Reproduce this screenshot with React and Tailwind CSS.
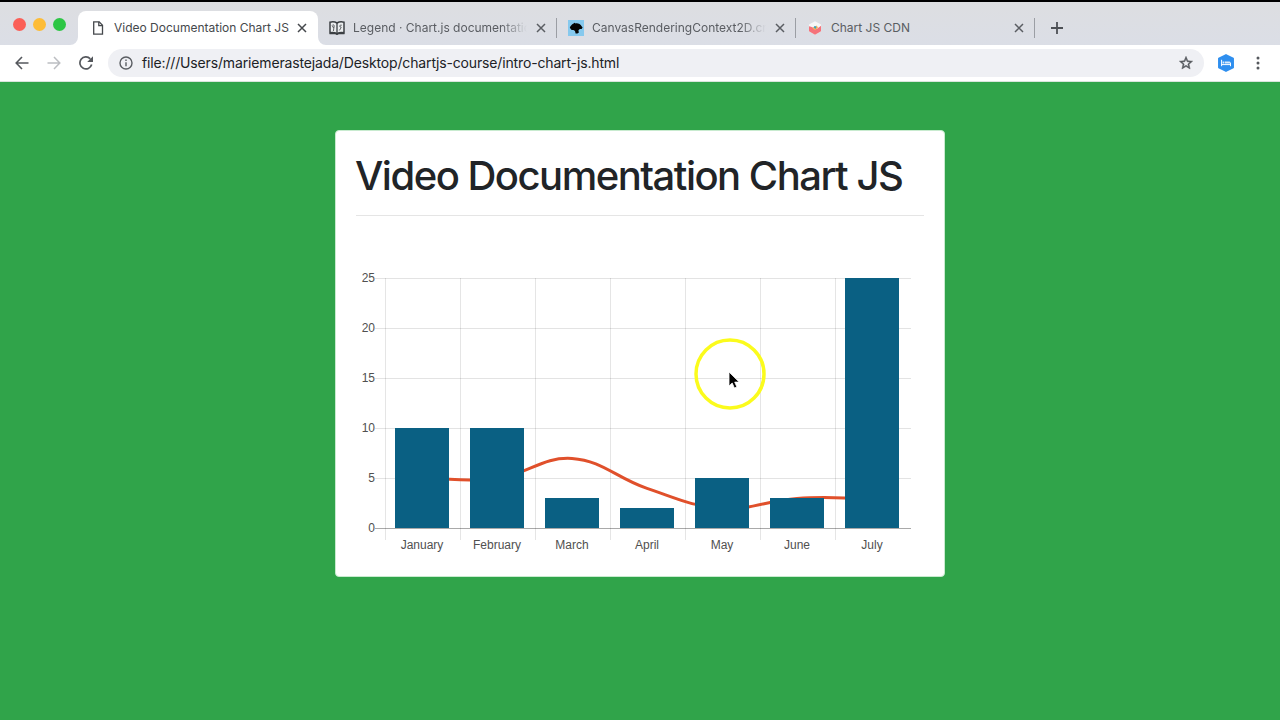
import React from "react";

const UI = "font-['Inter','Liberation_Sans',sans-serif]";

function CloseIcon({ className }) {
  return (
    <svg className={className} width="10" height="10" viewBox="0 0 10 10" fill="none" stroke="currentColor" strokeWidth="1.5">
      <path d="M1 1l8 8M9 1l-8 8" />
    </svg>
  );
}

function FileIcon() {
  return (
    <svg width="12" height="14" viewBox="0 0 12 14" fill="none" stroke="#45484c" strokeWidth="1.3">
      <path d="M1.7 0.8h5.500l3.300 3.400v9H1.700z" />
      <path d="M6.8 0.8v3.8h3.7" />
    </svg>
  );
}

function BookIcon() {
  return (
    <svg width="16" height="14" viewBox="0 0 16 14" fill="none" stroke="#3c4044">
      <path d="M1 1.2C3.500.6 6 .8 8 2c2-1.200 4.500-1.400 7-.8v10.500c-2.500-.5-5-.3-7 1-2-1.300-4.500-1.500-7-1z" fill="#eceef0" strokeWidth="1.500" />
      <path d="M.5 12.700h6l1.500.7 1.500-.7h6" strokeWidth="1.300" />
      <path d="M8 2v11" strokeWidth="1.300" />
      <path d="M3 4.600c.6-1.200 2.200-1 2.200.2L4.400 10M3.400 5l1.200 2M12.800 4.200c-1.400-.4-2.400.2-2 1.400l1.400.6c-.2 1.400-1.400 2-1.800 3.200" strokeWidth=".8" />
    </svg>
  );
}

function RaccoonIcon() {
  return (
    <svg width="16" height="16" viewBox="0 0 16 16">
      <rect width="16" height="16" fill="#86c9ee" />
      <path d="M1.800 7.600C2.600 5.400 4 4.600 5.200 3.800L6.600 2.800l1 .6c2.400-.4 5 .8 6 2.800l1 1.400-1 1.500-1.700-.1c-.8.5-1.300.9-1.500 1.600l.5 2-1.500.9H7.600l-.6-2.600-1.500-1-1.800.1-1-.9z" fill="#050505" />
    </svg>
  );
}

function ChartJsIcon() {
  return (
    <svg width="14" height="14" viewBox="0 0 14 14">
      <path d="M7 .3l6 3.300v6.700L7 13.700 1 10.300V3.600z" fill="#f7f7f8" />
      <path d="M1 5.200l2 .5 2.300 1.100L9 7.800l4-3v5.500L7 13.700 1 10.300z" fill="#f5737b" />
      <path d="M4.300 6.800L6.500 6l2.300-1.500L10 6.800 7.600 8.700 6 8.400z" fill="#f3b75c" />
      <path d="M5.600 6.300l1-1.300 1.200.2.700 1-1.100 1.700z" fill="#3d9fc4" />
    </svg>
  );
}

function Chart() {
  const months = ["January", "February", "March", "April", "May", "June", "July"];
  const bars = [10, 10, 3, 2, 5, 3, 25];
  const line = [5, 5, 7, 4, 2, 3, 3];
  const cx = (i) => 66 + 75 * i;
  const cy = (v) => 268 - 10 * v;

  const controls = line.map((v, i) => {
    const p = [cx(i), cy(v)];
    const a = i > 0 ? [cx(i - 1), cy(line[i - 1])] : p;
    const b = i < line.length - 1 ? [cx(i + 1), cy(line[i + 1])] : p;
    const d1 = Math.hypot(p[0] - a[0], p[1] - a[1]);
    const d2 = Math.hypot(b[0] - p[0], b[1] - p[1]);
    const f1 = (0.4 * d1) / (d1 + d2);
    const f2 = (0.4 * d2) / (d1 + d2);
    return {
      before: [p[0] - f1 * (b[0] - a[0]), p[1] - f1 * (b[1] - a[1])],
      after: [p[0] + f2 * (b[0] - a[0]), p[1] + f2 * (b[1] - a[1])],
      p,
    };
  });
  const path = controls
    .map((c, i) => (i === 0 ? `M${c.p}` : `C${controls[i - 1].after} ${c.before} ${c.p}`))
    .join(" ");

  return (
    <svg width="568" height="300" viewBox="0 0 568 300" className="block font-['Liberation_Sans',sans-serif] text-[12px]">
      {[0, 5, 10, 15, 20, 25].map((v) => (
        <g key={v}>
          <rect x="19" y={cy(v)} width="536" height="1" fill={v === 0 ? "#a9a9a9" : "#e3e3e3"} />
          <text x="19" y={cy(v) + 4.4} textAnchor="end" fill="#505050">{v}</text>
        </g>
      ))}
      {[0, 1, 2, 3, 4, 5, 6].map((i) => (
        <rect key={i} x={29 + 75 * i} y="18" width="1" height="262" fill="#000" fillOpacity="0.1" />
      ))}
      <path d={path} fill="none" stroke="#e0502b" strokeWidth="3" transform="translate(0 .4)" />
      {bars.map((v, i) => (
        <g key={i}>
          <rect x={39 + 75 * i} y={cy(v)} width="54" height={10 * v} fill="#0a6083" />
          <text x={cx(i)} y="289" textAnchor="middle" fill="#505050">{months[i]}</text>
        </g>
      ))}
    </svg>
  );
}

function Tabs() {
  const title = "shrink-0 overflow-hidden whitespace-nowrap text-[12px] leading-5";
  const fade = "[mask-image:linear-gradient(to_right,#000_85%,transparent)]";
  return (
    <div className="flex h-[43px] items-start bg-gradient-to-b from-[#dddee1] to-[#dbdee6] text-[#5a5d62]">
      <div className="flex w-[78px] gap-[7px] pl-[12.5px] pt-[16px]">
        <span className="size-[13px] rounded-full bg-[#fb5f57]" />
        <span className="size-[13px] rounded-full bg-[#fdbc37]" />
        <span className="size-[13px] rounded-full bg-[#2dc645]" />
      </div>
      <div className="relative mt-[9px] flex h-[34px] w-[240px] items-center rounded-t-lg bg-white pl-[14px] text-[#45484c]">
        <svg className="absolute -left-2 bottom-0" width="8" height="8"><path d="M8 0v8H0a8 8 0 0 0 8-8z" fill="#fff" /></svg>
        <svg className="absolute -right-2 bottom-0" width="8" height="8"><path d="M0 0v8h8a8 8 0 0 1-8-8z" fill="#fff" /></svg>
        <FileIcon />
        <span className={`${title} ml-[10px] w-[178px]`}>Video Documentation Chart JS</span>
        <CloseIcon className="ml-[5px]" />
      </div>
      <div className="mt-[9px] flex h-[34px] w-[239px] items-center pl-[11px]">
        <BookIcon />
        <span className={`${title} ${fade} ml-2 w-[174px]`}>Legend · Chart.js documentation</span>
        <CloseIcon className="ml-[9px]" />
        <span className="ml-[10px] h-5 w-px bg-[#9b9ea4]" />
      </div>
      <div className="mt-[9px] flex h-[34px] w-[239px] items-center pl-[11px]">
        <RaccoonIcon />
        <span className={`${title} ${fade} ml-2 w-[174px]`}>CanvasRenderingContext2D.cr</span>
        <CloseIcon className="ml-[9px]" />
        <span className="ml-[10px] h-5 w-px bg-[#9b9ea4]" />
      </div>
      <div className="mt-[9px] flex h-[34px] w-[239px] items-center pl-[12px]">
        <ChartJsIcon />
        <span className={`${title} ml-[9px] w-[174px]`}>Chart JS CDN</span>
        <CloseIcon className="ml-[9px]" />
        <span className="ml-[10px] h-5 w-px bg-[#9b9ea4]" />
      </div>
      <svg className="ml-4 mt-[20px]" width="12" height="12" viewBox="0 0 12 12" stroke="#4d5055" strokeWidth="1.800"><path d="M6 0v12M0 6h12" /></svg>
    </div>
  );
}

function Toolbar() {
  return (
    <div className="flex h-[37px] items-center border-b border-[#d9e5dc] bg-white pl-[15px]">
      <svg width="14" height="14" viewBox="0 0 14 14" fill="none" stroke="#55585d" strokeWidth="1.600"><path d="M13.500 7H1.500M7 1L1.200 7 7 13" /></svg>
      <svg className="ml-[18px]" width="14" height="14" viewBox="0 0 14 14" fill="none" stroke="#bcbec2" strokeWidth="1.500"><path d="M.5 7h12M7 1l5.800 6L7 13" /></svg>
      <svg className="ml-[18px]" width="14" height="14" viewBox="0 0 14 14" fill="none" stroke="#55585d" strokeWidth="1.700">
        <path d="M12.700 8.600A6 6 0 1 1 11.300 2.800" />
        <path d="M14 .2v5.800H8.200z" fill="#55585d" stroke="none" />
      </svg>
      <div className="ml-[15px] flex h-7 w-[1096px] items-center rounded-full bg-[#eff0f4] pl-[11px] pr-[10px]">
        <svg width="14" height="14" viewBox="0 0 14 14" fill="none" stroke="#5a5d62" strokeWidth="1.400">
          <circle cx="7" cy="7" r="6" />
          <path d="M7 6.200v4M7 3.500v1.500" />
        </svg>
        <span className="ml-[9px] text-[14px] leading-5 tracking-[-0.15px] whitespace-nowrap text-[#202226]">file:///Users/mariemerastejada/Desktop/chartjs-course/intro-chart-js.html</span>
        <svg className="ml-auto" width="16" height="16" viewBox="0 0 24 24" fill="#55585d" stroke="#55585d" strokeWidth=".7">
          <path d="M22 9.240l-7.190-.62L12 2 9.190 8.630 2 9.240l5.460 4.730L5.820 21 12 17.270 18.180 21l-1.630-7.030L22 9.240zM12 15.400l-3.760 2.270 1-4.280-3.320-2.880 4.380-.38L12 6.100l1.710 4.040 4.380.38-3.320 2.880 1 4.280L12 15.400z" />
        </svg>
      </div>
      <svg className="ml-[13px]" width="18" height="18" viewBox="0 0 18 18">
        <path d="M9 .8l7.200 3.700v9L9 17.200 1.800 13.500v-9z" fill="#2f8fef" stroke="#2f8fef" strokeWidth="1.500" strokeLinejoin="round" />
        <path d="M4.600 5.800v6.400M4.600 10.600h8.900M13.500 8.700v3.500" stroke="#fff" strokeWidth="1" />
        <path d="M5.600 7.600h1.800v1.800H5.600zM8 7.400h4.200q1.200 0 1.200 1.200v1H8z" fill="#d8eafc" />
      </svg>
      <svg className="ml-[21px]" width="4" height="14" viewBox="0 0 4 14" fill="#55585d"><circle cx="2" cy="2" r="1.500" /><circle cx="2" cy="7" r="1.500" /><circle cx="2" cy="12" r="1.500" /></svg>
    </div>
  );
}

export default function App() {
  return (
    <div className={`relative flex h-[720px] w-[1280px] flex-col overflow-hidden bg-[#30a44a] ${UI}`}>
      <div className="h-[2px] shrink-0 bg-black" />
      <Tabs />
      <Toolbar />
      <main className="flex flex-1 justify-center">
        <section className="mt-12 h-[447px] w-[610px] rounded-[4px] border border-[#c8ebcf] bg-white px-5 pt-5">
          <h1 className="-ml-px h-12 whitespace-nowrap text-[40px] leading-[50px] font-medium tracking-[-1.5px] text-[#212427]">Video Documentation Chart JS</h1>
          <hr className="mt-4 border-[#e5e5e5]" />
          <div className="mt-[44px]">
            <Chart />
          </div>
        </section>
      </main>
      <svg className="absolute left-[690px] top-[334px]" width="80" height="80" viewBox="0 0 80 80">
        <circle cx="40" cy="40" r="34" fill="none" stroke="#fbfb1c" strokeWidth="3.500" />
        <path d="M39 38v14l3.200-3 2.200 5 2.500-1-2.200-4.900h4.500z" fill="#000" stroke="#fff" strokeWidth=".8" />
      </svg>
    </div>
  );
}
